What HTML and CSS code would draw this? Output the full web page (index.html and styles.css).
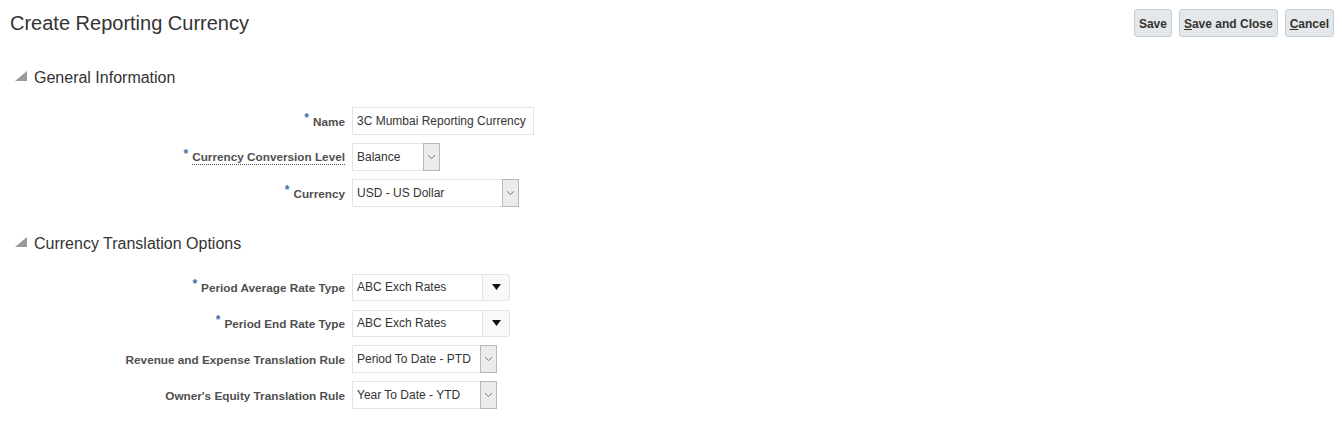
FILE: index.html
```html
<!DOCTYPE html>
<html>
<head>
<meta charset="utf-8">
<link rel="stylesheet" href="styles.css">
</head>
<body>
<div class="page">
  <div class="header">
    <h1 class="title">Create Reporting Currency</h1>
    <div class="actions">
      <button class="btn">Save</button>
      <button class="btn"><u>S</u>ave and Close</button>
      <button class="btn"><u>C</u>ancel</button>
    </div>
  </div>

  <div class="section-head sec1">
    <span class="disclose"></span>
    <span class="section-title">General Information</span>
  </div>
  <div class="form form1">
    <div class="label"><span class="req">*</span><span>Name</span></div>
    <div class="field"><div class="input w-name">3C Mumbai Reporting Currency</div></div>

    <div class="label"><span class="req">*</span><span class="dotted">Currency Conversion Level</span></div>
    <div class="field">
      <div class="select w-ccl"><span class="val">Balance</span><span class="sbtn"><svg width="9" height="6" viewBox="0 0 9 6"><path d="M1 1.2 L4.5 4.6 L8 1.2" fill="none" stroke="#7a7a7a" stroke-width="1"/></svg></span></div>
    </div>

    <div class="label"><span class="req">*</span><span>Currency</span></div>
    <div class="field">
      <div class="select w-cur"><span class="val">USD - US Dollar</span><span class="sbtn"><svg width="9" height="6" viewBox="0 0 9 6"><path d="M1 1.2 L4.5 4.6 L8 1.2" fill="none" stroke="#7a7a7a" stroke-width="1"/></svg></span></div>
    </div>
  </div>

  <div class="section-head sec2">
    <span class="disclose"></span>
    <span class="section-title">Currency Translation Options</span>
  </div>
  <div class="form form2">
    <div class="label"><span class="req">*</span><span>Period Average Rate Type</span></div>
    <div class="field">
      <div class="choice w-rate"><span class="val">ABC Exch Rates</span><span class="cbtn"><svg width="9" height="6" viewBox="0 0 9 6"><path d="M0 0 L9 0 L4.5 6 Z" fill="#111"/></svg></span></div>
    </div>

    <div class="label"><span class="req">*</span><span>Period End Rate Type</span></div>
    <div class="field">
      <div class="choice w-rate"><span class="val">ABC Exch Rates</span><span class="cbtn"><svg width="9" height="6" viewBox="0 0 9 6"><path d="M0 0 L9 0 L4.5 6 Z" fill="#111"/></svg></span></div>
    </div>

    <div class="label"><span>Revenue and Expense Translation Rule</span></div>
    <div class="field">
      <div class="select w-rule"><span class="val">Period To Date - PTD</span><span class="sbtn"><svg width="9" height="6" viewBox="0 0 9 6"><path d="M1 1.2 L4.5 4.6 L8 1.2" fill="none" stroke="#7a7a7a" stroke-width="1"/></svg></span></div>
    </div>

    <div class="label"><span>Owner's Equity Translation Rule</span></div>
    <div class="field">
      <div class="select w-rule"><span class="val">Year To Date - YTD</span><span class="sbtn"><svg width="9" height="6" viewBox="0 0 9 6"><path d="M1 1.2 L4.5 4.6 L8 1.2" fill="none" stroke="#7a7a7a" stroke-width="1"/></svg></span></div>
    </div>
  </div>
</div>
</body>
</html>
```
FILE: styles.css
```css
* { box-sizing: border-box; }
html, body {
  margin: 0;
  padding: 0;
  background: #ffffff;
  font-family: "Liberation Sans", Arial, sans-serif;
  color: #333333;
}
.page {
  width: 1342px;
  height: 436px;
  overflow: hidden;
}
.header {
  display: flex;
  align-items: center;
  justify-content: space-between;
  padding: 9px 8px 0 10px;
  height: 37px;
}
.title {
  margin: 0;
  font-size: 20px;
  font-weight: normal;
  line-height: 24px;
  color: #333333;
}
.actions {
  display: flex;
  gap: 7px;
}
.btn {
  height: 28px;
  padding: 0 4px;
  font-family: "Liberation Sans", Arial, sans-serif;
  font-size: 12px;
  font-weight: bold;
  color: #333333;
  background: #e4e8ea;
  border: 1px solid #c4ced7;
  border-radius: 3px;
  line-height: 28px;
}
.btn u { text-decoration: underline; }

.section-head {
  display: flex;
  align-items: center;
  height: 20px;
  padding-left: 15px;
}
.sec1 { margin-top: 31px; }
.sec2 { margin-top: 27px; }
.disclose {
  width: 0;
  height: 0;
  border-style: solid;
  border-width: 0 0 10px 12px;
  border-color: transparent transparent #9a9a9a transparent;
  margin-right: 7px;
  position: relative;
  top: -2px;
}
.section-title {
  font-size: 16px;
  color: #333333;
  line-height: 20px;
}

.form {
  display: grid;
  grid-template-columns: 345px auto;
  column-gap: 7px;
  row-gap: 8px;
}
.form1 { margin-top: 19px; }
.form2 { margin-top: 19px; }
.label {
  height: 28px;
  display: flex;
  align-items: center;
  justify-content: flex-end;
  font-size: 11.75px;
  font-weight: bold;
  color: #4f4f4f;
  white-space: nowrap;
}
.req {
  color: #3a6fa5;
  font-size: 12px;
  position: relative;
  top: -3px;
  font-weight: bold;
  margin-right: 4px;
}
.dotted {
  border-bottom: 1px dotted #555555;
  line-height: 14px;
}
.field {
  height: 28px;
  display: flex;
  align-items: center;
}
.input, .select, .choice {
  height: 28px;
  border: 1px solid #dfe4e7;
  background: #ffffff;
  font-size: 12px;
  color: #333333;
  display: flex;
  align-items: center;
}
.input {
  padding-left: 4px;
  white-space: nowrap;
  overflow: hidden;
}
.w-name { width: 182px; }
.w-ccl { width: 88px; }
.w-cur { width: 167px; }
.w-rate { width: 158px; height: 27px; border-radius: 0 3px 3px 0; }
.w-rule { width: 145px; }
.val {
  flex: 1;
  padding-left: 4px;
  white-space: nowrap;
  overflow: hidden;
}
.sbtn {
  width: 17px;
  height: 28px;
  margin: -1px -1px -1px 0;
  background: #ececec;
  border: 1px solid #b8b8b8;
  display: flex;
  align-items: center;
  justify-content: center;
}
.cbtn {
  width: 28px;
  height: 27px;
  margin: -1px -1px -1px 0;
  background: #f8f9fa;
  border: 1px solid #dfe4e7;
  border-radius: 0 3px 3px 0;
  display: flex;
  align-items: center;
  justify-content: center;
}
```
